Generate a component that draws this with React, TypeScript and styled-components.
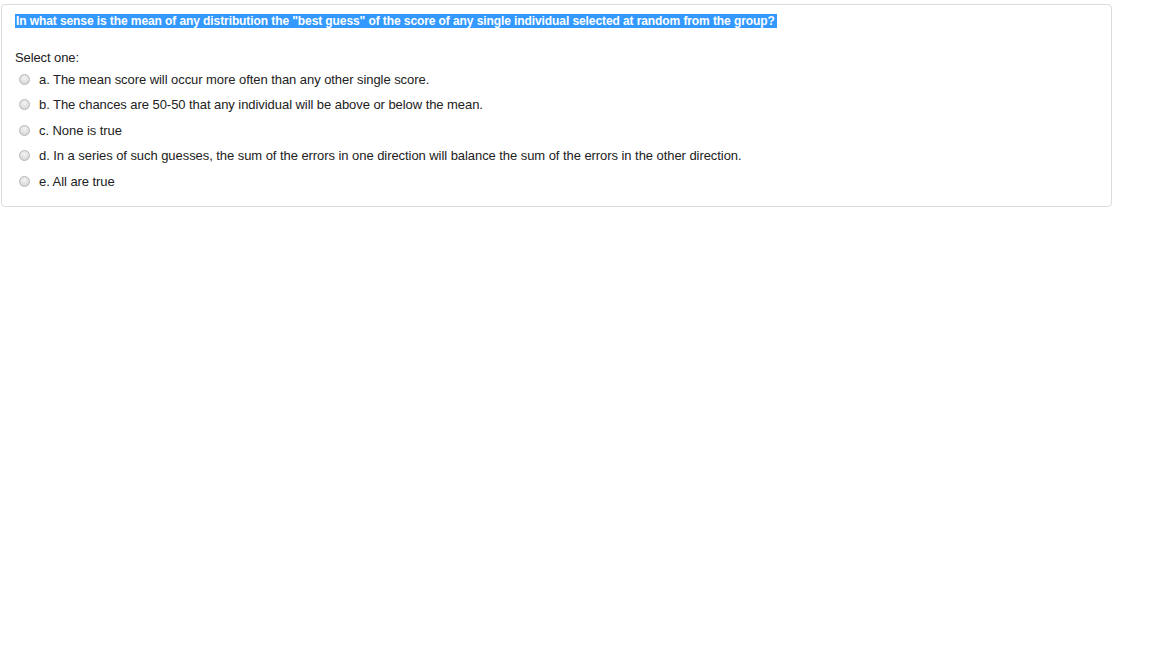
import React from "react";
import styled, { createGlobalStyle } from "styled-components";

const Global = createGlobalStyle`
  html, body { margin: 0; padding: 0; background: #fff; }
  body { font-family: "Liberation Sans", Arial, sans-serif; color: #333; }
`;

const Page = styled.div`
  padding: 4px 0 0 1px;
  width: 1111px;
`;

const Card = styled.div`
  border: 1px solid #dcdcdc;
  border-radius: 4px;
  padding: 9px 13px 12px 13px;
  background: #fff;
`;

const Question = styled.div`
  font-size: 12px;
  font-weight: bold;
  line-height: 14px;
  letter-spacing: -0.09px;
  color: #fff;
  margin-bottom: 22px;
`;

const Highlight = styled.span`
  background: #3399ff;
  padding: 0 2px 0 1px;
`;

const Prompt = styled.div`
  font-size: 13px;
  letter-spacing: -0.1px;
  line-height: 15px;
  color: #222;
  margin-bottom: 1.5px;
`;

const Options = styled.div`
  display: flex;
  flex-direction: column;
  padding-left: 4px;
`;

const Option = styled.label`
  display: flex;
  align-items: center;
  height: 25.5px;
  font-size: 13px;
  letter-spacing: -0.06px;
  color: #222;
`;

const Radio = styled.span`
  width: 9px;
  height: 9px;
  border-radius: 50%;
  border: 1px solid #b8b8b8;
  background: radial-gradient(circle at 50% 35%, #f4f4f4 0%, #dedede 60%, #c9c9c9 100%);
  margin-right: 9px;
  flex-shrink: 0;
`;

const options = [
  "a. The mean score will occur more often than any other single score.",
  "b. The chances are 50-50 that any individual will be above or below the mean.",
  "c. None is true",
  "d. In a series of such guesses, the sum of the errors in one direction will balance the sum of the errors in the other direction.",
  "e. All are true",
];

export default function App() {
  return (
    <>
      <Global />
      <Page>
        <Card>
          <Question>
            <Highlight>
              In what sense is the mean of any distribution the "best guess" of the score of any single individual selected at random from the group?
            </Highlight>
          </Question>
          <Prompt>Select one:</Prompt>
          <Options>
            {options.map((o) => (
              <Option key={o}>
                <Radio />
                {o}
              </Option>
            ))}
          </Options>
        </Card>
      </Page>
    </>
  );
}
